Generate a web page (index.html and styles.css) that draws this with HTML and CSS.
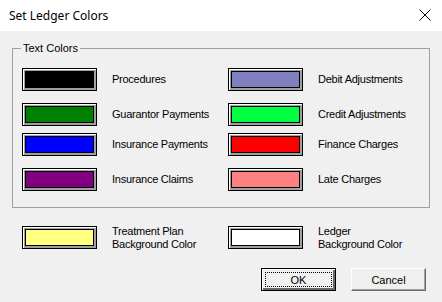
FILE: index.html
```html
<!DOCTYPE html>
<html lang="en">
<head>
    <meta charset="UTF-8">
    <title>Set Ledger Colors</title>
    <link rel="stylesheet" href="styles.css">
</head>
<body>

    <div class="title-bar">
        <span class="title">Set Ledger Colors</span>
        <svg class="close" width="12" height="12" viewBox="0 0 12 12">
            <path d="M0.5 0.5 L11.5 11.5 M11.5 0.5 L0.5 11.5" stroke="#000" stroke-width="1" fill="none"/>
        </svg>
    </div>

    <div class="dialog">
        <!-- Text colour group -->
        <div class="group">
            <span class="legend">Text Colors</span>
            <div class="color-grid">
                <div class="item"><span class="swatch"><span class="fill" style="background:#000000"></span></span><span class="label">Procedures</span></div>
                <div class="item"><span class="swatch"><span class="fill" style="background:#8080c0"></span></span><span class="label">Debit Adjustments</span></div>
                <div class="item"><span class="swatch"><span class="fill" style="background:#008000"></span></span><span class="label">Guarantor Payments</span></div>
                <div class="item"><span class="swatch"><span class="fill" style="background:#00ff40"></span></span><span class="label">Credit Adjustments</span></div>
                <div class="item"><span class="swatch"><span class="fill" style="background:#0000ff"></span></span><span class="label">Insurance Payments</span></div>
                <div class="item"><span class="swatch"><span class="fill" style="background:#ff0000"></span></span><span class="label">Finance Charges</span></div>
                <div class="item"><span class="swatch"><span class="fill" style="background:#800080"></span></span><span class="label">Insurance Claims</span></div>
                <div class="item"><span class="swatch"><span class="fill" style="background:#ff8080"></span></span><span class="label">Late Charges</span></div>
            </div>
        </div>

        <!-- Background colours -->
        <div class="bg-row">
            <div class="item"><span class="swatch"><span class="fill" style="background:#ffff80"></span></span><span class="label">Treatment Plan<br>Background Color</span></div>
            <div class="item"><span class="swatch"><span class="fill" style="background:#ffffff"></span></span><span class="label">Ledger<br>Background Color</span></div>
        </div>

        <div class="buttons">
            <button class="btn default"><span class="focus">OK</span></button>
            <button class="btn">Cancel</button>
        </div>
    </div>

</body>
</html>
```

FILE: styles.css
```css
body { margin: 0; background: #f0f0f0; font-family: "Liberation Sans", Arial, sans-serif; font-size: 11px; color: #000; }

.title-bar {
    height: 31px; background: #fff; display: flex; align-items: center;
    justify-content: space-between; padding: 0 11px 0 9px;
}
.title { font-family: "Noto Sans", "Open Sans", sans-serif; font-size: 12px; margin-top: -1px; }
.close { margin-top: -1px; }

.dialog { padding: 17px 0 0 12px; }

.group {
    width: 416px; height: 158px; border: 1px solid #a0a0a0;
}
.legend {
    display: table; margin: -7px 0 0 8px; padding: 0 2px; background: #f0f0f0;
    line-height: 13px;
}

.color-grid {
    display: grid; grid-template-columns: 206px auto;
    grid-template-rows: 35px 30px 35px 23px; padding: 13px 0 0 9px;
}

.item { display: flex; align-items: center; height: 23px; }

.swatch {
    width: 75px; height: 23px; box-sizing: border-box; border: 1px solid #000;
    background: #a0a0a0; padding: 2px; box-shadow: inset 1px 1px #fff;
    display: block; flex-shrink: 0;
}
.fill { display: block; height: 100%; box-sizing: border-box; border: 1px solid #000; }

.label { margin-left: 15px; line-height: 13px; white-space: nowrap; letter-spacing: -0.25px; }

.bg-row { display: grid; grid-template-columns: 206px auto; padding: 18px 0 0 10px; }

.buttons { display: flex; justify-content: flex-end; gap: 15px; padding: 19px 16px 0 0; }
.btn {
    width: 75px; height: 23px; box-sizing: border-box; background: #f0f0f0;
    font-family: "Liberation Sans", Arial, sans-serif; font-size: 11px; color: #000;
    border: 1px solid; border-color: #fff #696969 #696969 #fff;
    box-shadow: inset -1px -1px #a0a0a0; padding: 0; cursor: pointer;
}
.btn.default { border: 1px solid #000; box-shadow: inset 1px 1px #fff, inset -2px -2px #696969; padding: 3px; }
.focus {
    display: flex; align-items: center; justify-content: center; height: 100%;
    box-sizing: border-box; border: 1px dotted #000;
}
```
